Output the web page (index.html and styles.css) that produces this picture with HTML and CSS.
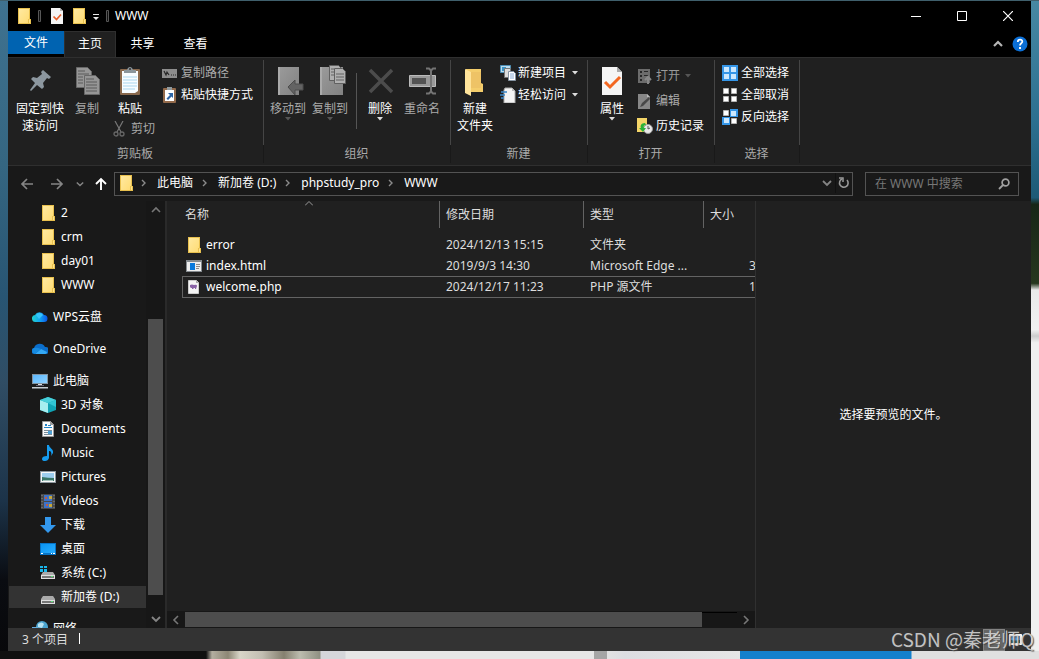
FILE: index.html
```html
<!DOCTYPE html>
<html lang="zh-CN">
<head>
<meta charset="utf-8">
<title>WWW</title>
<link rel="stylesheet" href="styles.css">
</head>
<body>
<svg class="defs" aria-hidden="true">
  <defs>
    <linearGradient id="gFolder" x1="0" y1="0" x2="1" y2="1"><stop offset="0" stop-color="#ffe9a0"/><stop offset="1" stop-color="#ffdc74"/></linearGradient>
    <linearGradient id="gScreen" x1="0" y1="0" x2="1" y2="1"><stop offset="0" stop-color="#5cb8ff"/><stop offset="1" stop-color="#8ed2ff"/></linearGradient>
    <linearGradient id="gDesk" x1="0" y1="0" x2="1" y2="1"><stop offset="0" stop-color="#0a93f0"/><stop offset="1" stop-color="#27adff"/></linearGradient>
    <linearGradient id="gCloud" x1="0" y1="0" x2="1" y2="0"><stop offset="0" stop-color="#22d3ce"/><stop offset=".5" stop-color="#12a5f2"/><stop offset="1" stop-color="#0b55e8"/></linearGradient>
    <linearGradient id="gGrey" x1="0" y1="0" x2="1" y2="1"><stop offset="0" stop-color="#9b9b9b"/><stop offset="1" stop-color="#828282"/></linearGradient>
  </defs>
  <symbol id="folder" viewBox="0 0 16 16"><path d="M2 0h12v11h1v5H2z" fill="#e8c04e"/><path d="M3 1h10v10h-1v4H3z" fill="url(#gFolder)"/><path d="M13 11.500h1V15h-1z" fill="#ffe48f"/></symbol>
  <symbol id="checkdoc" viewBox="0 0 16 16"><path d="M1 0h9l3 3v13H1z" fill="#f4f4f4"/><path d="M10 0v3h3z" fill="#b5b5b5"/><path d="M3.500 8.500l3 3 4.500-5" fill="none" stroke="#e8602c" stroke-width="1.700"/></symbol>
  <symbol id="bar" viewBox="0 0 4 12"><path d="M.5.5h2v11h-2z" fill="#111" stroke="#575757"/></symbol>
  <symbol id="right" viewBox="0 0 8 8"><path d="M2 1l3 3-3 3" fill="none" stroke="#8b8b8b" stroke-width="1.400"/></symbol>
  <symbol id="down" viewBox="0 0 10 10"><path d="M1 3l4 4 4-4" fill="none" stroke="#858585" stroke-width="1.800"/></symbol>
  <symbol id="caret" viewBox="0 0 6 4"><path d="M0 0h6L3 3.500z" fill="currentColor"/></symbol>
</svg>

<main class="window">
  <header class="titlebar">
    <svg class="i16"><use href="#folder"/></svg>
    <svg class="bar"><use href="#bar"/></svg>
    <button class="quick" aria-label="属性"><svg class="i16"><use href="#checkdoc"/></svg></button>
    <button class="quick" aria-label="新建文件夹"><svg class="i16"><use href="#folder"/></svg></button>
    <button class="quick more" aria-label="自定义快速访问工具栏"><svg width="8" height="8" viewBox="0 0 8 8"><path d="M1 0h6v1H1zM1 3h6L4 6z" fill="#e8e8e8"/></svg></button>
    <svg class="bar"><use href="#bar"/></svg>
    <h1 class="title">WWW</h1>
    <button class="winbtn" aria-label="最小化"><svg width="10" height="10"><path d="M0 5h10v1H0z" fill="#fff"/></svg></button>
    <button class="winbtn" aria-label="最大化"><svg width="10" height="10"><path d="M.5.5h9v9h-9z" fill="none" stroke="#fff"/></svg></button>
    <button class="winbtn" aria-label="关闭"><svg width="10" height="10"><path d="M0 0l10 10M10 0L0 10" stroke="#fff" stroke-width="1.200"/></svg></button>
  </header>

  <nav class="tabs">
    <button class="tab file">文件</button>
    <button class="tab active">主页</button>
    <button class="tab">共享</button>
    <button class="tab">查看</button>
    <button class="fold" aria-label="折叠功能区"><svg width="10" height="8"><path d="M1 6l4-4 4 4" fill="none" stroke="#b5b5b5" stroke-width="2.200"/></svg></button>
    <button class="help" aria-label="帮助"><svg width="16" height="16"><circle cx="8" cy="8" r="7.500" fill="#0b6fd6"/><path d="M5.800 6C5.800 2.800 10.500 3 10.300 5.700 10.200 7.300 8 7.300 8 9.500" fill="none" stroke="#fff" stroke-width="1.800"/><path d="M7 11h2v2H7z" fill="#fff"/></svg></button>
  </nav>

  <section class="ribbon">
    <div class="group clip">
      <div class="tools">
        <button class="big wide">
          <svg class="i32" viewBox="0 0 32 32"><path d="M19 5l8 7-2 2-2-1-4 5 1 4-2 2-5-4-6 6-1-1 5-7-4-4 2-2 4 1 5-4-1-2z" fill="#8c979f"/></svg>
          <span>固定到快<br>速访问</span></button>
        <button class="big copy off">
          <svg class="i32" viewBox="0 0 32 32"><g fill="#969696" stroke="#686868"><path d="M5.500 2.500h11l4 4v16h-15z"/><path d="M13.500 10.500h11l4 4v15h-15z"/></g><path d="M7 6h7M7 9h11M7 12h5M7 15h5M7 18h5M15 14h8M15 17h11M15 20h11M15 23h11M15 26h11" stroke="#5b5b5b"/></svg>
          <span>复制</span></button>
        <div class="stack cutstack">
          <button class="big paste">
            <svg class="i32" viewBox="0 0 32 32"><rect x="6" y="4" width="20" height="26" rx="1" fill="#89684c"/><path d="M8 6h16v20l-3 2H8z" fill="#f8fcff"/><path d="M9 12h14M9 15h14M9 18h14M9 21h14M9 24h12" stroke="#a9d5ed"/><path d="M10 8V5h3c1-4 5-4 6 0h3v3z" fill="#8b959b"/><circle cx="16" cy="4" r="1" fill="#333"/></svg>
            <span>粘贴</span></button>
          <button class="small cut off"><svg class="i16"><path d="M3 0l6 11M11 0L5 11" stroke="#777" stroke-width="1.200"/><g fill="none" stroke="#666" stroke-width="1.300"><circle cx="4" cy="13" r="2"/><circle cx="10" cy="13" r="2"/></g></svg>剪切</button>
        </div>
        <div class="stack pathstack">
          <button class="small off"><svg class="i16"><path d="M0 4h15v9H0z" fill="#8d8d8d"/><path d="M2 6l2 4 1-3 2 3M9 10h1M11 10h1M13 10h1" fill="none" stroke="#292929" stroke-width="1.200"/></svg>复制路径</button>
          <button class="small"><svg class="i16"><rect x="1" y="1" width="13" height="15" rx="1" fill="#936a4b"/><path d="M3 3h9v11H3z" fill="#fff"/><path d="M5 0h5v3H5z" fill="#909a9e"/><path d="M6 6h5v5L9.500 9.500 6 13 4.500 11.500 8 8z" fill="#2e64a4"/></svg>粘贴快捷方式</button>
        </div>
      </div>
      <p class="caption">剪贴板</p>
    </div>

    <div class="group organize">
      <div class="tools">
        <button class="big off"><svg class="i32" viewBox="0 0 32 32"><path d="M6 2h21v28H6z" fill="url(#gGrey)"/><path d="M6 2h2v28H6z" fill="#aaa"/><path d="M16 22l7-7v4h8v6h-8v5z" fill="#636363" stroke="#4c4c4c"/></svg><span>移动到</span><svg class="caret"><use href="#caret"/></svg></button>
        <button class="big off"><svg class="i32" viewBox="0 0 32 32"><path d="M6 2h23v28H6z" fill="url(#gGrey)"/><path d="M6 2h2v28H6z" fill="#aaa"/><g fill="#b0b0b0" stroke="#606060"><path d="M15.500.5h9l3 3v12h-12z"/><path d="M20.500 3.500h8l3 3v12h-11z"/></g><path d="M17 4h3M17 7h3M17 10h3M22 9h8M22 12h8M22 15h8" stroke="#626262"/></svg><span>复制到</span><svg class="caret"><use href="#caret"/></svg></button>
        <span class="rule"></span>
        <button class="big delete"><svg class="i32" viewBox="0 0 32 32"><path d="M6 5l22 22M28 5L6 27" stroke="#4c4c4c" stroke-width="3.500"/></svg><span>删除</span><svg class="caret"><use href="#caret"/></svg></button>
        <button class="big off"><svg class="i32" viewBox="0 0 32 32"><path d="M3.500 10.500h26v11h-26z" fill="#999" stroke="#bbb"/><path d="M6 13h14v6H6z" fill="#535353"/><path d="M20 3.500h3l2 2 2-2h3M25 5v22M20 28.500h3l2-2 2 2h3" fill="none" stroke="#747474" stroke-width="2"/></svg><span>重命名</span></button>
      </div>
      <p class="caption">组织</p>
    </div>

    <div class="group create">
      <div class="tools">
        <button class="big"><svg class="i32" viewBox="0 0 32 32"><path d="M7 4h15v14l2 1v8H7z" fill="#f4cd6b"/><path d="M6 4l6 3v24l-6-3z" fill="#ffe49b"/><path d="M12 7h10v16H12z" fill="#eec366"/></svg><span>新建<br>文件夹</span></button>
        <div class="stack">
          <button class="small"><svg class="i16"><path d="M.5.5h10v7H.5z" fill="#badcf0" stroke="#4d8eb4"/><path d="M2 2h4v4H2z" fill="#3a94c6"/><path d="M4.500 3.500h6v9h-6z" fill="#ddd" stroke="#777"/><path d="M8.500 6.500h5l2 2v7h-7z" fill="#fff" stroke="#8593a2"/><path d="M10 9h4M10 11h4M10 13h4" stroke="#8bacd4"/></svg>新建项目<svg class="caret"><use href="#caret"/></svg></button>
          <button class="small"><svg class="i16"><path d="M5 1h7l3 3v12H4V3z" fill="#f4f4f4" stroke="#aaa"/><path d="M12 1v3h3" fill="#bbb"/><path d="M1 5h6M0 8h5M1 11h3" stroke="#3a86c8" stroke-width="1.500"/></svg>轻松访问<svg class="caret"><use href="#caret"/></svg></button>
        </div>
      </div>
      <p class="caption">新建</p>
    </div>

    <div class="group open">
      <div class="tools">
        <button class="big"><svg class="i32" viewBox="0 0 32 32"><path d="M6 2h15l5 5v23H6z" fill="#f5f5f5"/><path d="M21 2v5h5z" fill="#aaa"/><path d="M9 17l5 5 10-10" fill="none" stroke="#f36721" stroke-width="3"/></svg><span>属性</span><svg class="caret"><use href="#caret"/></svg></button>
        <div class="stack tall">
          <button class="small dim"><svg class="i16"><path d="M1 1h12v14H1z" fill="#6c6c6c"/><path d="M3 3h2v2H3zM3 7h2v2H3zM3 11h2v2H3zM7 3h4v1H7zM7 7h4v1H7z" fill="#272727"/><path d="M11 16V9M8 12l3-3 3 3" fill="none" stroke="#888" stroke-width="2"/></svg>打开<svg class="caret"><use href="#caret"/></svg></button>
          <button class="small off"><svg class="i16"><path d="M1 1h9l3 3v12H1z" fill="#878787"/><path d="M10 1v3h3" fill="#bbb"/><path d="M3 14l2-4 7-6 1 2-7 7z" fill="#484848"/></svg>编辑</button>
          <button class="small"><svg class="i16" viewBox="0 0 16 16"><path d="M0 0h10v14H0z" fill="#f4d568"/><circle cx="11" cy="11" r="4.500" fill="#e9e9e9" stroke="#999"/><path d="M11 8v3l2-1" fill="none" stroke="#555"/><path d="M8 5C4 5 3 8 4 10H2l4 4 3-4H7C6 8 7 7 9 7z" fill="#2bb339"/></svg>历史记录</button>
        </div>
      </div>
      <p class="caption">打开</p>
    </div>

    <div class="group select">
      <div class="tools"><div class="stack">
        <button class="small"><svg class="i16"><path d="M0 0h16v16H0z" fill="#3596e8"/><path d="M2 2h5v5H2zM9 2h5v5H9zM2 9h5v5H2zM9 9h5v5H9z" fill="#cbe8ff"/></svg>全部选择</button>
        <button class="small"><svg class="i16"><path d="M1.500 1.500h5v5h-5zM9.500 1.500h5v5h-5zM1.500 9.500h5v5h-5zM9.500 9.500h5v5h-5z" fill="#fff" stroke="#b4b4b4"/></svg>全部取消</button>
        <button class="small"><svg class="i16"><path d="M1.500 1.500h5v5h-5zM9.500 9.500h5v5h-5z" fill="#fff" stroke="#b4b4b4"/><path d="M8 0h8v8H8zM0 8h8v8H0z" fill="#3596e8"/><path d="M9 2h5v5H9zM2 9h5v5H2z" fill="#cbe8ff"/></svg>反向选择</button>
      </div></div>
      <p class="caption">选择</p>
    </div>
  </section>

  <section class="location">
    <button class="nav" aria-label="后退"><svg width="14" height="12"><path d="M13 6H2M7 1L2 6l5 5" fill="none" stroke="#858585" stroke-width="1.700"/></svg></button>
    <button class="nav fwd" aria-label="前进"><svg width="14" height="12"><path d="M1 6h11M7 1l5 5-5 5" fill="none" stroke="#858585" stroke-width="1.700"/></svg></button>
    <button class="nav recent" aria-label="最近位置"><svg width="8" height="8" viewBox="0 0 10 10"><use href="#down"/></svg></button>
    <button class="nav up" aria-label="上移"><svg width="12" height="14"><path d="M6 13V2M1 7l5-5 5 5" fill="none" stroke="#fff" stroke-width="1.900"/></svg></button>
    <div class="address">
      <svg class="i16"><use href="#folder"/></svg>
      <svg class="sep"><use href="#right"/></svg><a href="#">此电脑</a>
      <svg class="sep"><use href="#right"/></svg><a href="#">新加卷 (D:)</a>
      <svg class="sep"><use href="#right"/></svg><a href="#">phpstudy_pro</a>
      <svg class="sep"><use href="#right"/></svg><a href="#">WWW</a>
      <button class="drop" aria-label="历史位置"><svg width="10" height="10"><use href="#down"/></svg></button>
      <button class="refresh" aria-label="刷新"><svg width="12" height="12"><path d="M9 3a4.300 4.300 0 1 1-5-1" fill="none" stroke="#999" stroke-width="1.600"/><path d="M1 1h4v4" fill="none" stroke="#999" stroke-width="1.500"/></svg></button>
    </div>
    <label class="search"><input type="search" placeholder="在 WWW 中搜索" aria-label="搜索"><svg width="12" height="12"><circle cx="7.500" cy="4.500" r="3.400" fill="none" stroke="#a0a0a0" stroke-width="1.700"/><path d="M5 7l-4 4" stroke="#a0a0a0" stroke-width="1.800"/></svg></label>
  </section>

  <section class="content">
    <aside class="side">
      <div class="tree">
        <a href="#" class="node sub"><svg class="i16"><use href="#folder"/></svg>2</a>
        <a href="#" class="node sub"><svg class="i16"><use href="#folder"/></svg>crm</a>
        <a href="#" class="node sub"><svg class="i16"><use href="#folder"/></svg>day01</a>
        <a href="#" class="node sub"><svg class="i16"><use href="#folder"/></svg>WWW</a>
        <a href="#" class="node root"><svg class="i16"><path d="M4 13a3.500 3.500 0 0 1-1-7 5 5 0 0 1 9 0 3.500 3.500 0 0 1 0 7z" fill="url(#gCloud)"/><path d="M4 6a4 4 0 0 1 7 0l-4 4z" fill="#36c3fa"/></svg>WPS云盘</a>
        <a href="#" class="node root"><svg class="i16"><path d="M3 13a3 3 0 0 1-1-6 6 6 0 0 1 11-1 3.500 3.500 0 0 1 1 7z" fill="#0b6ecb"/><path d="M3 13L9 8l6 3q0 2-2 2z" fill="#35a9f5"/><path d="M2 7q3-1 7 1l-6 5Q0 12 0 10t2-3z" fill="#168ae0"/></svg>OneDrive</a>
        <a href="#" class="node root"><svg class="i16"><path d="M0 1h16v10H0z" fill="#8293a0"/><path d="M1 2h14v8H1z" fill="url(#gScreen)"/><path d="M6 11h4v1H6z" fill="#ddd"/><path d="M4 12h8v1H4z" fill="#667"/><path d="M0 14h16v1.500H0z" fill="#c4ccd3"/></svg>此电脑</a>
        <a href="#" class="node sub"><svg class="i16"><path d="M8 0l8 3v10l-8 3-8-3V3z" fill="#10a3b4"/><path d="M0 3l8 3v10l-8-3z" fill="#a5eef0"/><path d="M0 3l8-3 8 3-8 3z" fill="#48cfda"/><path d="M8 6l8-3v7z" fill="#31c5d4"/></svg>3D 对象</a>
        <a href="#" class="node sub"><svg class="i16"><path d="M2.500.5h8l3 3v12h-11z" fill="#fafafa" stroke="#999"/><path d="M10 0v4h4z" fill="#999"/><path d="M5 3h2v2H5z" fill="#2183c5"/><path d="M4 6.500h8M8 4.500h3" stroke="#2183c5"/><path d="M4 9.500h8M4 11.500h4M4 13.500h8" stroke="#7a8c98"/><path d="M8 10h4v3H8z" fill="#4ca1d5"/></svg>Documents</a>
        <a href="#" class="node sub"><svg class="i16"><path d="M7 0h2c0 3 5 4 4 8l-2 3c1-3 0-5-2-5v7q-1 3-4 3-3 0-3-2 0-3 5-3z" fill="#159cef"/></svg>Music</a>
        <a href="#" class="node sub"><svg class="i16"><path d="M0 2h16v12H0z" fill="#8b969d"/><path d="M1 3h14v10H1z" fill="#f7f7f7"/><path d="M2 4h12v8H2z" fill="#9dceee"/><path d="M2 8q6 1 12 1v3H2z" fill="#3a7768"/><path d="M3 11h10v1H3z" fill="#a7c6c0"/></svg>Pictures</a>
        <a href="#" class="node sub"><svg class="i16"><path d="M1 1h14v15H1z" fill="#4a4a4a"/><path d="M2 2v14M14 2v14" stroke="#888" stroke-dasharray="1 2"/><path d="M4 2h8v6H4zM4 9h8v6H4z" fill="#3d73c9"/><path d="M9 3h3v3H9zM9 11h3v3H9z" fill="#c5a839"/><path d="M5 4h2v2H5zM6 11h2v2H6z" fill="#bb5d48"/></svg>Videos</a>
        <a href="#" class="node sub"><svg class="i16"><path d="M5 0h6v8h5l-8 8-8-8h5z" fill="#3398ed"/></svg>下载</a>
        <a href="#" class="node sub"><svg class="i16"><path d="M0 2h16v12H0z" fill="#0674c7"/><path d="M1 3h14v9H1z" fill="url(#gDesk)"/><path d="M1 12.500h2M11 12.500h1M13 12.500h2" stroke="#fff"/></svg>桌面</a>
        <a href="#" class="node sub"><svg class="i16"><path d="M3 7h10l2 3v4H1v-4z" fill="#aaa"/><path d="M1 10h14v4H1z" fill="#dedede"/><path d="M2 11h12v2H2z" fill="#777"/><path d="M11 11h2v1h-2z" fill="#58e475"/><path d="M0 1h3v2H0zM4 1h3v2H4zM0 4h3v3H0zM4 4h3v3H4z" fill="#18b7ed"/></svg>系统 (C:)</a>
        <a href="#" class="node sub current"><svg class="i16"><path d="M3 7h10l2 3v5H1v-5z" fill="#aaa"/><path d="M1 11h14v4H1z" fill="#dedede"/><path d="M2 12h12v2H2z" fill="#777"/><path d="M11 12h2v1h-2z" fill="#58e475"/></svg>新加卷 (D:)</a>
        <a href="#" class="node root"><svg class="i16"><circle cx="10" cy="6" r="6" fill="#4ba4cf"/><path d="M6 3q4-3 6 0l-2 4-4-1z" fill="#b8e2f2"/><path d="M0 6h6v5H0z" fill="#68acdc"/></svg>网络</a>
      </div>
      <div class="vscroll">
        <svg width="10" height="10"><path d="M1 7l4-4 4 4" fill="none" stroke="#777" stroke-width="1.600"/></svg>
        <div class="vtrack"><span class="vthumb"></span></div>
        <svg width="10" height="10"><use href="#down"/></svg>
      </div>
    </aside>

    <section class="files">
      <div class="listing">
        <table>
          <colgroup><col class="cname"><col class="cdate"><col class="ctype"><col class="csize"></colgroup>
          <thead><tr>
            <th><span>名称<svg class="sort" width="8" height="5"><path d="M0 4.500l4-4 4 4" fill="none" stroke="#999"/></svg></span></th>
            <th><span>修改日期</span></th><th><span>类型</span></th><th><span>大小</span></th>
          </tr></thead>
          <tbody>
            <tr><td><div class="name"><svg class="i16"><use href="#folder"/></svg>error</div></td><td>2024/12/13 15:15</td><td>文件夹</td><td></td></tr>
            <tr><td><div class="name"><svg class="i16"><path d="M0 2h16v12H0z" fill="#858b90"/><path d="M1 4h14v9H1z" fill="#eee"/><path d="M4 5h5v7H4z" fill="#0879dc"/><path d="M10 6.500h4M10 8.500h4M10 10.500h3" stroke="#8b8b8b"/></svg>index.html</div></td><td>2019/9/3 14:30</td><td>Microsoft Edge ...</td><td class="size">3</td></tr>
            <tr class="focused"><td><div class="name"><svg class="i16"><path d="M2.500 1.500h8l2 2v11h-10z" fill="#f4f4f4" stroke="#ccc"/><path d="M10 1v3h3" fill="#aaa"/><path d="M4 6q2-1 4 0 3-1 3 1l-1 3H9V9H8l-1 1H6V9H5L4 8z" fill="#8962a6"/></svg>welcome.php</div></td><td>2024/12/17 11:23</td><td>PHP 源文件</td><td class="size">1</td></tr>
          </tbody>
        </table>
      </div>
      <div class="hscroll">
        <svg width="10" height="10"><path d="M7 1L3 5l4 4" fill="none" stroke="#777" stroke-width="1.600"/></svg>
        <div class="htrack"><span class="hthumb"></span></div>
        <svg width="10" height="10"><path d="M3 1l4 4-4 4" fill="none" stroke="#777" stroke-width="1.600"/></svg>
      </div>
    </section>
    <section class="preview">选择要预览的文件。</section>
  </section>

  <footer class="status">
    <span class="count">3 个项目</span>
    <button class="view on" aria-label="详细信息"><svg width="14" height="14"><path d="M1 2h3M6 2h7M1 6h3M6 6h7M1 10h3M6 10h7" stroke="#eee" stroke-width="1.500"/></svg></button>
    <button class="view" aria-label="大图标"><svg width="14" height="12"><path d="M.5.5h12v10H.5z" fill="#eee" stroke="#fff"/><path d="M2 2h9v7H2z" fill="#5c9be0"/><path d="M2 6q5 1 9 0v3H2z" fill="#345a55"/></svg></button>
  </footer>
</main>
<p class="watermark">CSDN @秦老师Q</p>
</body>
</html>
```

FILE: styles.css
```css
* { box-sizing: border-box; }
body {
  margin: 0;
  height: 100vh;
  padding: 1px 8px 8px;
  overflow: hidden;
  position: relative;
  font: 12px/16px "Noto Sans", "Noto Sans CJK SC", sans-serif;
  color: #fff;
  background:
    linear-gradient(#3f5f6c, #3f5f6c) 0 0 / 100% 1px no-repeat,
    linear-gradient(90deg, #101010 206px, #b3aea0 212px, #8d8775 228px, #d8d5c8 240px, #c2beb2 262px, #85806f 284px, #bcbcae 300px, #8f9082 320px, #d5d6da 321px, #d5d6da 345px, #e6e6e6 346px, #e6e6e6 594px, #a5a5a5 594px, #a5a5a5 607px, #e2e2e2 607px, #dcdde1 625px, #e6e6e6 740px, #1480cc 740px, #1480cc 911px, #e0e0e0 912px) 0 100% / 100% 8px no-repeat,
    linear-gradient(#3f7290, #356681 25%, #285573 45%, #304d64 58%, #1c3349 76%, #0a0c11 88%, #08080a) 0 0 / 8px 100% no-repeat,
    linear-gradient(#4788a3, #2d7090 18%, #1d5a76 30%, #172617 31%, #26371e 43%, #e9e9e9 44%, #f1f1f1 50%, #ccc 51%, #f0f0f0 52%) 100% 0 / 8px 100% no-repeat,
    #111;
}
button { font: inherit; color: inherit; background: none; border: 0; padding: 0; margin: 0; }
a { color: inherit; text-decoration: none; }
h1, p { margin: 0; font: inherit; }
svg { display: block; flex: none; }
.defs { position: absolute; width: 0; height: 0; }
.i16 { width: 16px; height: 16px; }
.i32 { width: 32px; height: 32px; }

.window { height: 100%; display: flex; flex-direction: column; background: #202020; overflow: hidden; }

.titlebar { display: flex; align-items: center; flex: none; height: 30px; padding-left: 8px; background: #000; }
.bar { width: 4px; height: 12px; margin: 0 8px 0 6px; }
.quick { margin-right: 5px; }
.titlebar .more { margin: 3px 0 0; }
.titlebar .more + .bar { margin: 0 5px 0 6px; }
.title { flex: 1; }
.winbtn { width: 46px; height: 30px; display: grid; place-items: center; }

.tabs { display: flex; align-items: flex-start; flex: none; height: 26px; background: #000; }
.tab { width: 53px; height: 26px; }
.file { width: 56px; height: 23px; background: #0063b1; }
.active { width: 52px; padding-bottom: 1px; background: #202020; border: 1px solid #2f2f2f; border-bottom: 0; }
.fold { margin: 9px 9px 0 auto; }
.help { margin: 5px 3px 0 0; }

.ribbon { display: flex; flex: none; height: 109px; padding-top: 1px; border-top: 1px solid #2f2f2f; border-bottom: 1px solid #2f2f2f; }
.group { display: flex; flex-direction: column; background: linear-gradient(#454545, #454545) 100% 1px / 1px 85px no-repeat, linear-gradient(#191919, #191919) 100% 86px / 1px 18px no-repeat; }
.tools { display: flex; align-items: flex-start; height: 86px; padding: 3px 3px 0; }
.caption { padding-right: 2px; text-align: center; line-height: 17px; color: #aaa; }
.clip { width: 256px; }
.organize { width: 187px; }
.create { width: 137px; }
.open { width: 127px; }
.select { width: 85px; }
.big { display: flex; flex-direction: column; align-items: center; width: 42px; padding-top: 3px; line-height: 17px; white-space: nowrap; }
.big span { padding-top: 3px; }
.big.wide { width: 58px; }
.big.copy { width: 36px; margin-right: 3px; }
.big.delete { width: 38px; margin-right: 2px; }
.create .big, .open .big { width: 42px; }
.big.paste { width: 44px; }
.caret { width: 6px; height: 4px; color: #ddd; }
.off { color: #aaa; }
.off .caret, .dim .caret { color: #555; }
.dim { color: #999; }
.rule { width: 1px; height: 56px; margin: 11px 4px 0 5px; background: #555; }
.stack { display: flex; flex-direction: column; align-items: flex-start; }
.small { display: flex; align-items: center; gap: 3px; height: 22px; white-space: nowrap; }
.small .caret { margin-left: 2px; }
.cutstack { width: 54px; }
.paste { height: 56px; }
.cut { padding-left: 4px; }
.create .stack { padding-left: 4px; }
.create .small { gap: 2px; }
.create .small .caret { margin-left: 4px; }
.tall { padding: 1px 0 0 4px; }
.tall .small { height: 25px; gap: 3px; }
.select .tools { padding-left: 7px; }

.location { display: flex; align-items: center; flex: none; height: 35px; padding: 0 12px; background: #191919; }
.nav { display: grid; place-items: center; width: 14px; height: 23px; }
.fwd { margin-left: 16px; }
.recent { margin-left: 9px; }
.up { margin-left: 7px; }
.address { display: flex; align-items: center; flex: 1; height: 24px; margin: 0 12px 0 6px; padding: 0 0 2px 3px; border: 1px solid #535353; }
.sep { width: 8px; height: 8px; margin: 0 9px 0 8px; }
.sep:nth-of-type(2) { margin: 0 9px 0 6px; }
.address a { white-space: nowrap; }
.drop { display: grid; place-items: center; width: 18px; height: 20px; margin-left: auto; border-right: 1px solid #111; }
.refresh { display: grid; place-items: center; width: 16px; height: 20px; }
.search { display: flex; align-items: center; width: 154px; height: 24px; padding: 0 8px 0 9px; border: 1px solid #535353; }
.search input { flex: 1; min-width: 0; padding: 0; border: 0; outline: 0; background: none; font: inherit; color: #fff; appearance: none; }
.search input::placeholder { color: #777; opacity: 1; }

.content { display: flex; flex: 1; min-height: 0; }
.side { display: flex; width: 159px; background: #191919; border-right: 2px solid #2a2a2a; overflow: hidden; }
.tree { flex: 1; overflow: hidden; padding-left: 1px; }
.node { display: flex; align-items: center; gap: 5px; height: 24px; padding-left: 23px; white-space: nowrap; }
.node.sub { padding-left: 31px; }
.root { margin-top: 8px; }
.current { background: #333; border-top: 1px solid #191919; border-bottom: 1px solid #191919; }
.vscroll { display: flex; flex-direction: column; align-items: center; width: 19px; padding: 4px 2px; background: #171717; }
.vtrack { flex: 1; display: flex; flex-direction: column; width: 15px; margin: 4px 0 8px; }
.vtrack::before { content: ""; flex: 100; }
.vthumb { flex: 276; background: #4d4d4d; }
.vtrack::after { content: ""; flex: 11; }

.files { display: flex; flex-direction: column; flex: 1; min-width: 0; }
.listing { flex: 1; overflow: hidden; }
table { width: 573px; min-width: 100%; margin-left: 15px; border-collapse: collapse; table-layout: fixed; }
.cname { width: 258px; }
.cdate { width: 144px; }
.ctype { width: 120px; }
th { height: 33px; padding: 0; text-align: left; vertical-align: top; font-weight: 400; color: #ddd; }
th span { display: block; height: 27px; padding-left: 6px; line-height: 27px; border-right: 1px solid #636363; }
th:first-child span { position: relative; padding-left: 3px; }
th:last-child span { border: 0; }
.sort { position: absolute; left: 123px; top: 0; }
td { height: 21px; padding: 0 6px; color: #ddd; white-space: nowrap; overflow: hidden; }
td:first-child { padding-left: 4px; color: #fff; }
.name { display: flex; align-items: center; gap: 4px; }
.size { padding: 0 0 0 45px; }
.focused td { height: 22px; box-shadow: inset 0 1px #636363, inset 0 -1px #636363; }
.focused td:first-child { box-shadow: inset 0 1px #636363, inset 0 -1px #636363, inset 1px 0 #636363; }
.hscroll { display: flex; align-items: center; height: 17px; padding: 0 4px; background: #171717; }
.htrack { display: flex; flex: 1; height: 15px; margin: 0 4px; }
.hthumb { flex: 518; background: #4d4d4d; }
.htrack::after { content: ""; flex: 35; border-top: 1px solid #000; }
.preview { display: grid; place-items: center; width: 276px; border-left: 1px solid #303030; }

.status { display: flex; align-items: center; flex: none; height: 23px; padding: 0 4px 0 14px; background: #333; color: #ddd; }
.count { flex: 1; }
.count::after { content: ""; display: inline-block; width: 1px; height: 11px; margin-left: 11px; background: #fff; }
.view { display: grid; place-items: center; width: 22px; height: 22px; border: 1px solid transparent; }
.view.on { background: #666; border-color: #838383; }

.watermark { position: absolute; right: 5px; bottom: 6px; font: 19px/28px "Noto Sans CJK SC", sans-serif; color: #d2d2d2; opacity: .9; text-shadow: 1px 1px 1px #444; }
```
